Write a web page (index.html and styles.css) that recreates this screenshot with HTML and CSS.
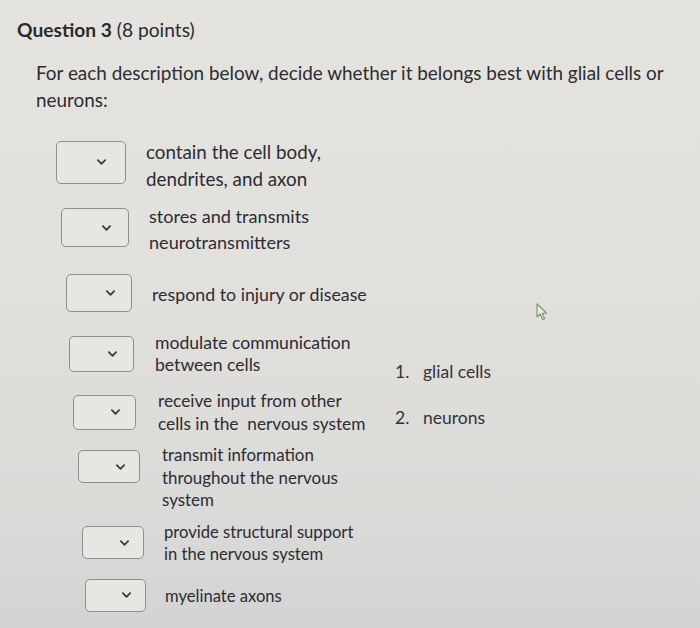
FILE: index.html
```html
<!DOCTYPE html>
<html lang="en">
<head>
<meta charset="utf-8">
<title>Question 3</title>
<link rel="stylesheet" href="styles.css">
</head>
<body>
<main class="page">
  <h2 class="title"><strong>Question 3</strong> <span class="pts">(8 points)</span></h2>
  <p class="prompt">For each description below, decide whether it belongs best with glial cells or<br>neurons:</p>

  <div class="matching">
    <div class="rows">
      <div class="row">
        <div class="select"><svg class="chev" viewBox="0 0 10 6"><path d="M1 1l4 4 4-4"/></svg></div>
        <div class="desc">contain the cell body,<br>dendrites, and axon</div>
      </div>
      <div class="row">
        <div class="select"><svg class="chev" viewBox="0 0 10 6"><path d="M1 1l4 4 4-4"/></svg></div>
        <div class="desc">stores and transmits<br>neurotransmitters</div>
      </div>
      <div class="row">
        <div class="select"><svg class="chev" viewBox="0 0 10 6"><path d="M1 1l4 4 4-4"/></svg></div>
        <div class="desc">respond to injury or disease</div>
      </div>
      <div class="row">
        <div class="select"><svg class="chev" viewBox="0 0 10 6"><path d="M1 1l4 4 4-4"/></svg></div>
        <div class="desc">modulate communication<br>between cells</div>
      </div>
      <div class="row">
        <div class="select"><svg class="chev" viewBox="0 0 10 6"><path d="M1 1l4 4 4-4"/></svg></div>
        <div class="desc">receive input from other<br>cells in the&nbsp; nervous system</div>
      </div>
      <div class="row">
        <div class="select"><svg class="chev" viewBox="0 0 10 6"><path d="M1 1l4 4 4-4"/></svg></div>
        <div class="desc">transmit information<br>throughout the nervous<br>system</div>
      </div>
      <div class="row">
        <div class="select"><svg class="chev" viewBox="0 0 10 6"><path d="M1 1l4 4 4-4"/></svg></div>
        <div class="desc">provide structural support<br>in the nervous system</div>
      </div>
      <div class="row">
        <div class="select"><svg class="chev" viewBox="0 0 10 6"><path d="M1 1l4 4 4-4"/></svg></div>
        <div class="desc">myelinate axons</div>
      </div>
    </div>

    <ol class="answers">
      <li><span class="num">1.</span><span>glial cells</span></li>
      <li><span class="num">2.</span><span>neurons</span></li>
    </ol>
  </div>

  <svg class="cursor" viewBox="0 0 12 18" width="12" height="18"><path d="M1 1 L1 14 L4.2 11 L6.6 16.5 L8.6 15.6 L6.3 10.3 L10.6 10.2 Z"/></svg>
</main>
</body>
</html>
```

FILE: styles.css
```css
* { box-sizing: border-box; }

html, body {
  margin: 0;
  padding: 0;
  height: 100%;
}

body {
  background: linear-gradient(180deg, #e5e3de 0%, #e1e0dc 45%, #d9d9d7 85%, #d3d3d2 100%);
  font-family: Lato, "Open Sans", sans-serif;
  color: #2c2c34;
  overflow: hidden;
}

.page {
  position: relative;
  height: 628px;
  padding: 17px 0 0 0;
}

.title {
  margin: 0 0 0 17px;
  font-size: 19.2px;
  line-height: 26px;
  font-weight: 400;
  color: #2a2a32;
}

.title strong { font-weight: 700; }

.prompt {
  margin: 16px 0 0 36px;
  font-size: 18.9px;
  line-height: 27px;
}

.matching {
  display: grid;
  grid-template-columns: 395px auto;
  margin-top: 25px;
}

.rows {
  display: flex;
  flex-direction: column;
}

.row {
  display: flex;
  align-items: center;
  gap: 20px;
}

.select {
  position: relative;
  flex: none;
  border: 1px solid #8e8e90;
  border-radius: 5px;
  background: #e7e6e3;
  display: flex;
  align-items: center;
}

.chev {
  width: 9px;
  height: 6px;
  fill: none;
  stroke: #3a3a42;
  stroke-width: 2;
  stroke-linecap: round;
  stroke-linejoin: round;
}

.desc {
  font-size: 17px;
  line-height: 27px;
  white-space: nowrap;
}

/* per-row geometry (the photo is taken at an angle) */
.row:nth-child(1) { margin-left: 56px; }
.row:nth-child(1) .select { width: 70px; height: 43px; padding-left: 40px; margin-bottom: 6px; }
.row:nth-child(1) .desc { line-height: 27px; font-size: 18.8px; }

.row:nth-child(2) { margin-left: 61px; margin-top: 11px; }
.row:nth-child(2) .select { width: 68px; height: 39px; padding-left: 40px; margin-bottom: 3px; }
.row:nth-child(2) .desc { line-height: 26px; font-size: 18.1px; }

.row:nth-child(3) { margin-left: 66px; margin-top: 19px; }
.row:nth-child(3) .select { width: 66px; height: 38px; padding-left: 39px; }
.row:nth-child(3) .desc { line-height: 24px; font-size: 17.8px; margin-top: 2px; }

.row:nth-child(4) { margin-left: 69px; margin-top: 20px; gap: 21px; }
.row:nth-child(4) .select { width: 65px; height: 36px; padding-left: 38px; }
.row:nth-child(4) .desc { line-height: 22px; font-size: 17.6px; }

.row:nth-child(5) { margin-left: 73px; margin-top: 13px; gap: 22px; }
.row:nth-child(5) .select { width: 63px; height: 35px; padding-left: 37px; }
.row:nth-child(5) .desc { line-height: 23px; font-size: 17.3px; }

.row:nth-child(6) { margin-left: 78px; margin-top: 9px; align-items: flex-start; gap: 22px; }
.row:nth-child(6) .select { width: 62px; height: 33px; padding-left: 37px; margin-top: 6px; }
.row:nth-child(6) .desc { line-height: 22.5px; font-size: 16.9px; }

.row:nth-child(7) { margin-left: 82px; margin-top: 9px; }
.row:nth-child(7) .select { width: 62px; height: 33px; padding-left: 37px; }
.row:nth-child(7) .desc { line-height: 22px; font-size: 16.6px; }

.row:nth-child(8) { margin-left: 85px; margin-top: 14px; gap: 19px; }
.row:nth-child(8) .select { width: 61px; height: 33px; padding-left: 36px; }
.row:nth-child(8) .desc { line-height: 24px; font-size: 16.6px; margin-top: 2px; }

.answers {
  list-style: none;
  margin: 0;
  padding: 222px 0 0 0;
  display: flex;
  flex-direction: column;
  gap: 22px;
  font-size: 17.5px;
  line-height: 24px;
  color: #33333a;
}

.answers li {
  display: flex;
}

.answers .num {
  width: 28px;
  flex: none;
}

.cursor {
  position: absolute;
  left: 536px;
  top: 303px;
  fill: #e6eedb;
  stroke: #7f9a6e;
  stroke-width: 1.2;
  stroke-linejoin: round;
}
```
